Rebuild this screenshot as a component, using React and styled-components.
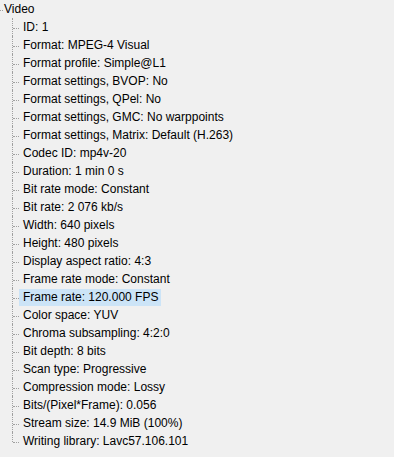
import React from 'react'
import styled, { createGlobalStyle } from 'styled-components'

const GlobalStyle = createGlobalStyle`
    html, body {
        margin: 0;
        padding: 0;
        background: #f0f0f0;
    }
    body {
        font-family: "Liberation Sans", Arial, sans-serif;
        font-size: 12px;
        color: #000;
    }
`

const Tree = styled.div`
    width: 394px;
    height: 457px;
    background: #f0f0f0;
    overflow: hidden;
`

const RootRow = styled.div`
    height: 18px;
    display: flex;
    align-items: center;
`

const RootDash = styled.span`
    width: 3px;
    height: 0;
    margin-top: 3px;
    border-top: 1px dotted #a0a0a0;
`

const RootLabel = styled.span`
    padding: 0 3px 0 1px;
    line-height: 17px;
`

const Children = styled.div`
    padding-left: 12px;
`

const Item = styled.div`
    height: 18px;
    display: flex;
    align-items: center;
`

const Rail = styled.span`
    align-self: flex-start;
    width: 0;
    height: ${p => (p.$last ? '10px' : '18px')};
    border-left: 1px dotted #a0a0a0;
`

const Connector = styled.span`
    width: 6px;
    height: 0;
    margin-top: 2px;
    border-top: 1px dotted #a0a0a0;
`

const Label = styled.span`
    margin-left: 0;
    padding: 0 3px 0 4px;
    height: 17px;
    line-height: 17px;
    white-space: nowrap;
    background: ${p => (p.$selected ? '#cce4f7' : 'transparent')};
`

const items = [
    'ID: 1',
    'Format: MPEG-4 Visual',
    'Format profile: Simple@L1',
    'Format settings, BVOP: No',
    'Format settings, QPel: No',
    'Format settings, GMC: No warppoints',
    'Format settings, Matrix: Default (H.263)',
    'Codec ID: mp4v-20',
    'Duration: 1 min 0 s',
    'Bit rate mode: Constant',
    'Bit rate: 2 076 kb/s',
    'Width: 640 pixels',
    'Height: 480 pixels',
    'Display aspect ratio: 4:3',
    'Frame rate mode: Constant',
    'Frame rate: 120.000 FPS',
    'Color space: YUV',
    'Chroma subsampling: 4:2:0',
    'Bit depth: 8 bits',
    'Scan type: Progressive',
    'Compression mode: Lossy',
    'Bits/(Pixel*Frame): 0.056',
    'Stream size: 14.9 MiB (100%)',
    'Writing library: Lavc57.106.101',
]

export default function App() {
    return (
        <Tree>
            <GlobalStyle />
            <RootRow>
                <RootDash />
                <RootLabel>Video</RootLabel>
            </RootRow>
            <Children>
                {items.map((text, i) => (
                    <Item key={i}>
                        <Rail $last={i === items.length - 1} />
                        <Connector />
                        <Label $selected={text.startsWith('Frame rate:')}>{text}</Label>
                    </Item>
                ))}
            </Children>
        </Tree>
    )
}
